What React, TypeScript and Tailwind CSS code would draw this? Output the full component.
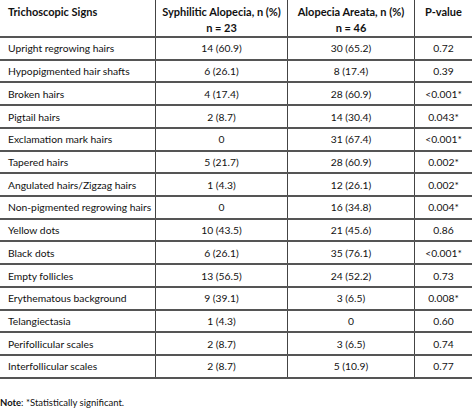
const rows: [string, string, string, string][] = [
  ["Upright regrowing hairs", "14 (60.9)", "30 (65.2)", "0.72"],
  ["Hypopigmented hair shafts", "6 (26.1)", "8 (17.4)", "0.39"],
  ["Broken hairs", "4 (17.4)", "28 (60.9)", "<0.001*"],
  ["Pigtail hairs", "2 (8.7)", "14 (30.4)", "0.043*"],
  ["Exclamation mark hairs", "0", "31 (67.4)", "<0.001*"],
  ["Tapered hairs", "5 (21.7)", "28 (60.9)", "0.002*"],
  ["Angulated hairs/Zigzag hairs", "1 (4.3)", "12 (26.1)", "0.002*"],
  ["Non-pigmented regrowing hairs", "0", "16 (34.8)", "0.004*"],
  ["Yellow dots", "10 (43.5)", "21 (45.6)", "0.86"],
  ["Black dots", "6 (26.1)", "35 (76.1)", "<0.001*"],
  ["Empty follicles", "13 (56.5)", "24 (52.2)", "0.73"],
  ["Erythematous background", "9 (39.1)", "3 (6.5)", "0.008*"],
  ["Telangiectasia", "1 (4.3)", "0", "0.60"],
  ["Perifollicular scales", "2 (8.7)", "3 (6.5)", "0.74"],
  ["Interfollicular scales", "2 (8.7)", "5 (10.9)", "0.77"],
];

const grid = "grid grid-cols-[155px_132px_127px_58px]";

export default function App() {
  return (
    <div className="w-[474px] h-[410px] bg-white text-[#111] font-['Lato','Noto_Sans',sans-serif] text-[10.3px] leading-[14px]">
      <div className="w-[472px]">
        <div className={`${grid} h-[38px] border-b-2 border-[#555] font-bold text-[11px] leading-[16px]`}>
          <div className="pl-[8px] pt-[4px]">Trichoscopic Signs</div>
          <div className="border-l border-[#444] pt-[4px] text-center">
            Syphilitic Alopecia, n (%)
            <br />
            n = 23
          </div>
          <div className="border-l border-[#444] pt-[4px] text-center">
            Alopecia Areata, n (%)
            <br />
            n = 46
          </div>
          <div className="border-l border-[#444] pt-[4px] text-center">P-value</div>
        </div>
        {rows.map((r) => (
          <div key={r[0]} className={`${grid} h-[22.73px] border-b-2 border-[#555]`}>
            <div className="pl-[8px] flex items-center">{r[0]}</div>
            <div className="border-l border-[#444] flex items-center justify-center">{r[1]}</div>
            <div className="border-l border-[#444] flex items-center justify-center">{r[2]}</div>
            <div className="border-l border-[#444] flex items-center justify-center">{r[3]}</div>
          </div>
        ))}
      </div>
      <div className="mt-[18px] text-[9.5px] leading-[11px]">
        <span className="font-bold">Note</span>: *Statistically significant.
      </div>
    </div>
  );
}
